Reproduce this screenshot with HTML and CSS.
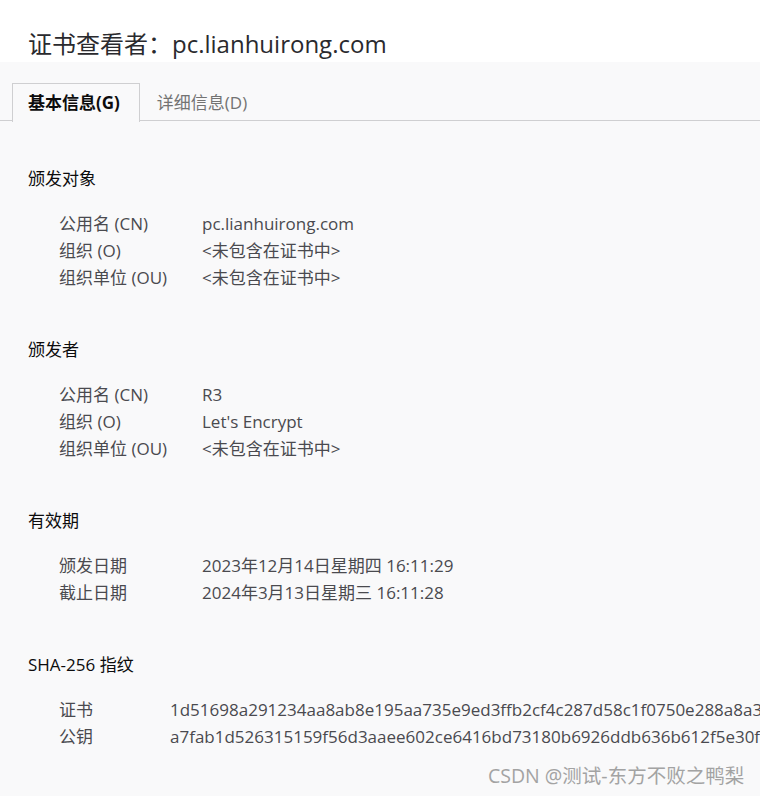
FILE: index.html
```html
<!DOCTYPE html>
<html lang="zh-CN">
<head>
<meta charset="utf-8">
<title>证书查看者</title>
<link rel="stylesheet" href="styles.css">
</head>
<body>
<header class="title">证书查看者：pc.lianhuirong.com</header>
<nav class="tabs">
  <div class="tab active">基本信息(G)</div>
  <div class="tab">详细信息(D)</div>
</nav>
<main class="content">
  <section class="section">
    <h2 class="heading">颁发对象</h2>
    <div class="rows">
      <div class="label">公用名 (CN)</div><div class="value">pc.lianhuirong.com</div>
      <div class="label">组织 (O)</div><div class="value">&lt;未包含在证书中&gt;</div>
      <div class="label">组织单位 (OU)</div><div class="value">&lt;未包含在证书中&gt;</div>
    </div>
  </section>
  <section class="section">
    <h2 class="heading">颁发者</h2>
    <div class="rows">
      <div class="label">公用名 (CN)</div><div class="value">R3</div>
      <div class="label">组织 (O)</div><div class="value">Let's Encrypt</div>
      <div class="label">组织单位 (OU)</div><div class="value">&lt;未包含在证书中&gt;</div>
    </div>
  </section>
  <section class="section">
    <h2 class="heading">有效期</h2>
    <div class="rows">
      <div class="label">颁发日期</div><div class="value">2023年12月14日星期四 16:11:29</div>
      <div class="label">截止日期</div><div class="value">2024年3月13日星期三 16:11:28</div>
    </div>
  </section>
  <section class="section">
    <h2 class="heading">SHA-256 指纹</h2>
    <div class="rows narrow">
      <div class="label">证书</div><div class="value">1d51698a291234aa8ab8e195aa735e9ed3ffb2cf4c287d58c1f0750e288a8a3f</div>
      <div class="label">公钥</div><div class="value">a7fab1d526315159f56d3aaee602ce6416bd73180b6926ddb636b612f5e30f4a</div>
    </div>
  </section>
</main>
<div class="watermark">CSDN @测试-东方不败之鸭梨</div>
</body>
</html>
```
FILE: styles.css
```css
html, body {
  margin: 0;
  padding: 0;
}
body {
  width: 760px;
  height: 796px;
  overflow: hidden;
  position: relative;
  background: #f9f9fa;
  font-family: "Open Sans", "Noto Sans CJK SC", sans-serif;
  color: #4a4a4f;
}
.title {
  background: #ffffff;
  height: 62px;
  box-sizing: border-box;
  padding: 28px 0 0 28px;
  font-size: 24px;
  line-height: 32px;
  color: #2a2a2e;
  white-space: nowrap;
}
.tabs {
  display: flex;
  padding: 21px 0 0 12px;
  border-bottom: 1px solid #cfcfd1;
  height: 37px;
}
.tab {
  font-size: 17px;
  line-height: 37px;
  padding: 0 16px;
  color: #737373;
  border: 1px solid transparent;
  border-bottom: none;
  height: 37px;
  white-space: nowrap;
}
.tab.active {
  color: #0c0c0d;
  font-weight: 700;
  padding: 0 19px 0 15px;
  border-color: #cfcfd1;
  background: #f9f9fa;
  height: 38px;
}
.content {
  padding: 44px 0 0 28px;
}
.section {
  margin-bottom: 45px;
}
.heading {
  margin: 0 0 18px 0;
  font-size: 17px;
  font-weight: 400;
  line-height: 27px;
  color: #0c0c0d;
}
.rows {
  display: grid;
  grid-template-columns: 143px auto;
  padding-left: 31px;
  font-size: 17px;
  line-height: 27px;
}
.rows.narrow {
  grid-template-columns: 111px auto;
}
.label, .value {
  white-space: nowrap;
}
.watermark {
  position: absolute;
  left: 488px;
  top: 763px;
  font-size: 19.5px;
  line-height: 26px;
  color: #a3a3a3;
  white-space: nowrap;
}
```
